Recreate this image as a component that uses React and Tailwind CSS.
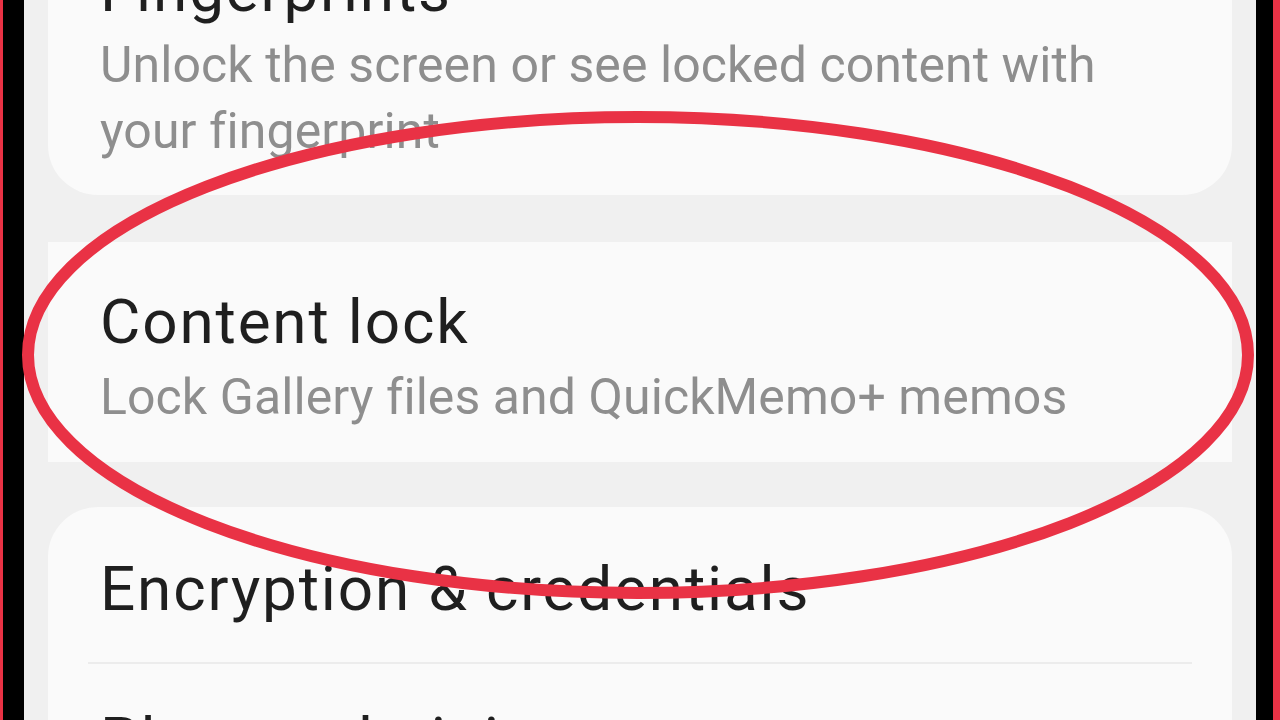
export default function App() {
  const font = { fontFamily: 'Roboto, "Noto Sans", Arial, sans-serif' };
  return (
    <div className="relative flex h-[720px] w-[1280px] overflow-hidden" style={font}>
      <div className="w-[3px] shrink-0 bg-[#e93245]" />
      <div className="w-[21px] shrink-0 bg-black" />
      <div className="flex flex-1 flex-col bg-[#f0f0f0] px-6">
        <div className="-mt-[90px] rounded-[50px] bg-[#fafafa] pb-[31px] pl-[52px] pr-[90px] pt-[44px]">
          <div className="text-[62px] leading-[72px] tracking-[1.85px] text-[#1f1f1f]">Fingerprints</div>
          <div className="mt-[6px] text-[50px] leading-[66px] tracking-[0.08px] text-[#8e8e8e]">
            Unlock the screen or see locked content with your fingerprint
          </div>
        </div>
        <div className="mt-[47px] bg-[#fafafa] pb-[32px] pl-[52px] pt-[44px]">
          <div className="text-[62px] leading-[72px] tracking-[1.85px] text-[#1f1f1f]">Content lock</div>
          <div className="mt-[6px] text-[50px] leading-[66px] tracking-[0.08px] text-[#8e8e8e]">
            Lock Gallery files and QuickMemo+ memos
          </div>
        </div>
        <div className="mt-[45px] flex-1 rounded-t-[50px] bg-[#fafafa] pt-[46px]">
          <div className="pb-[37px] pl-[52px] text-[62px] leading-[72px] tracking-[1.85px] text-[#1f1f1f]">
            Encryption &amp; credentials
          </div>
          <div className="ml-[40px] mr-[40px] h-[2px] bg-[#ececec]" />
          <div className="pl-[52px] pt-[40px] text-[62px] leading-[72px] tracking-[1.85px] text-[#1f1f1f]">
            Phone administrators
          </div>
        </div>
      </div>
      <div className="w-[17px] shrink-0 bg-black" />
      <div className="w-[7px] shrink-0 bg-[#e93245]" />
      <svg className="pointer-events-none absolute inset-0" width="1280" height="720" viewBox="0 0 1280 720">
        <ellipse cx="638" cy="355" rx="610" ry="238" fill="none" stroke="#e93245" strokeWidth="12" />
      </svg>
    </div>
  );
}
